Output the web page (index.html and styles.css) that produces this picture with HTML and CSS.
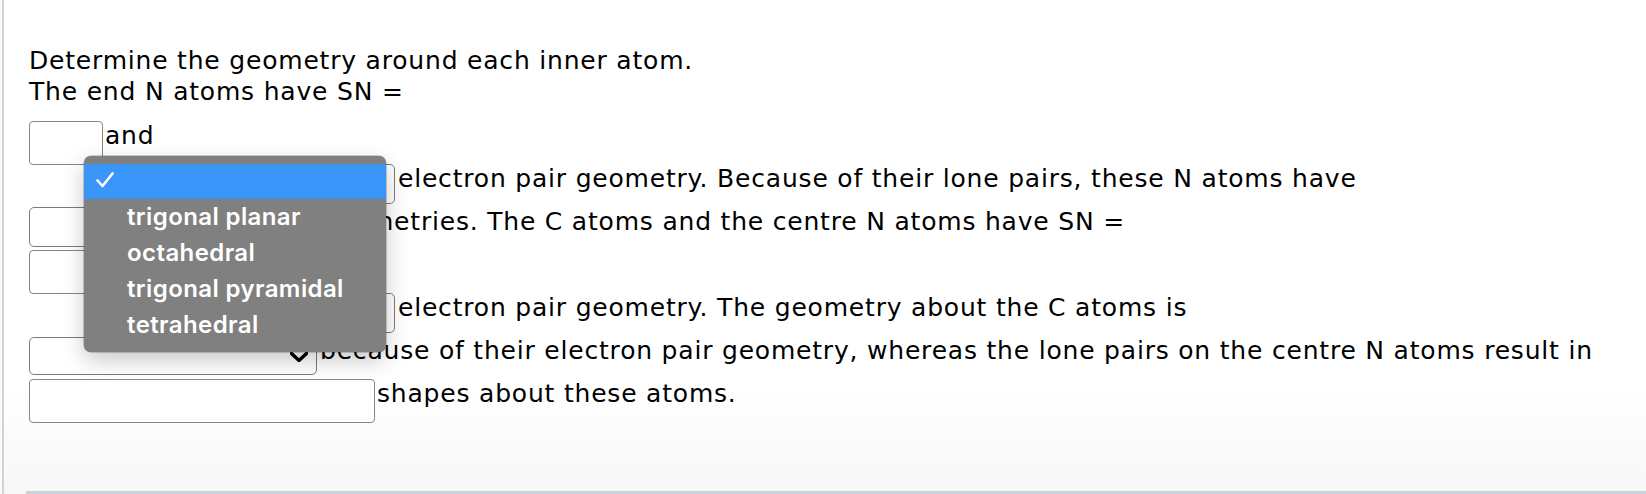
FILE: index.html
```html
<!DOCTYPE html>
<html lang="en">
<head>
<meta charset="utf-8">
<title>Geometry question</title>
<link rel="stylesheet" href="styles.css">
</head>
<body>
<div class="page">
  <div class="question">
    <p class="intro">Determine the geometry around each inner atom.<br>The end N atoms have SN =</p>

    <div class="row">
      <input class="field field-sn" type="text" aria-label="SN end atoms">
      <span class="txt">and</span>
    </div>

    <div class="row">
      <div class="sel sel-epg">
        <select aria-label="electron pair geometry"><option></option></select>
        <svg class="chev" viewBox="0 0 18 10" aria-hidden="true"><polyline points="1.5,1.5 9,8.5 16.5,1.5"/></svg>
      </div>
      <span class="txt">electron pair geometry. Because of their lone pairs, these N atoms have</span>
    </div>

    <div class="row">
      <div class="sel sel-geo">
        <select aria-label="geometry"><option></option></select>
        <svg class="chev" viewBox="0 0 18 10" aria-hidden="true"><polyline points="1.5,1.5 9,8.5 16.5,1.5"/></svg>
      </div>
      <span class="txt">geometries. The C atoms and the centre N atoms have SN =</span>
    </div>

    <div class="row">
      <input class="field field-sn" type="text" aria-label="SN inner atoms">
    </div>

    <div class="row">
      <div class="sel sel-epg">
        <select aria-label="electron pair geometry"><option></option></select>
        <svg class="chev" viewBox="0 0 18 10" aria-hidden="true"><polyline points="1.5,1.5 9,8.5 16.5,1.5"/></svg>
      </div>
      <span class="txt">electron pair geometry. The geometry about the C atoms is</span>
    </div>

    <div class="row">
      <div class="sel sel-geo sel-short">
        <select aria-label="C geometry"><option></option></select>
        <svg class="chev" viewBox="0 0 18 10" aria-hidden="true"><polyline points="1.5,1.5 9,8.5 16.5,1.5"/></svg>
      </div>
      <span class="txt">because of their electron pair geometry, whereas the lone pairs on the centre N atoms result in</span>
    </div>

    <div class="row">
      <input class="field field-wide" type="text" aria-label="shape">
      <span class="txt">shapes about these atoms.</span>
    </div>
  </div>

  <div class="popup" role="listbox">
    <div class="opt opt-selected">
      <svg class="check" viewBox="0 0 18 16" aria-hidden="true"><polyline points="1.5,8.5 6.5,14 16.5,1.5"/></svg>
    </div>
    <div class="opt">trigonal planar</div>
    <div class="opt">octahedral</div>
    <div class="opt">trigonal pyramidal</div>
    <div class="opt">tetrahedral</div>
  </div>

  <div class="rule"></div>
</div>
</body>
</html>
```

FILE: styles.css
```css
html, body {
  margin: 0;
  padding: 0;
}

body {
  width: 1646px;
  height: 494px;
  overflow: hidden;
  background: #fbfbfc;
  font-family: "DejaVu Sans", Verdana, sans-serif;
  color: #000;
}

.page {
  position: relative;
  margin-left: 2px;
  height: 494px;
  border-left: 2px solid #cdd4de;
  background: linear-gradient(to bottom, #ffffff 0%, #ffffff 78%, #f7f7f8 100%);
  display: flex;
  flex-direction: column;
}

.question {
  padding-left: 25px;
  flex: 1;
}

.intro {
  margin: 45px 0 14px 0;
  font-size: 25px;
  letter-spacing: 0.8px;
  line-height: 31px;
}

.row {
  display: flex;
  align-items: flex-start;
  height: 43px;
}

.txt {
  font-size: 25px;
  letter-spacing: 0.8px;
  line-height: 27px;
  padding-top: 1px;
  margin-left: 2px;
  white-space: nowrap;
}

.field {
  box-sizing: border-box;
  height: 44px;
  margin: 0;
  border: 1px solid #858585;
  border-radius: 4px;
  background: #fff;
  padding: 0;
  flex: none;
}

.field-sn {
  width: 74px;
}

.field-wide {
  width: 346px;
}

.sel {
  position: relative;
  flex: none;
  height: 40px;
}

.sel select {
  appearance: none;
  -webkit-appearance: none;
  box-sizing: border-box;
  width: 100%;
  height: 100%;
  margin: 0;
  border: 1px solid #7c7c7c;
  border-radius: 5px;
  background: #fff;
  font-size: 20px;
}

.sel-epg {
  width: 285px;
  margin-left: 81px;
}

.sel-geo {
  width: 288px;
}

.sel-short {
  height: 38px;
  margin-top: 1px;
}

.sel + .txt {
  margin-left: 3px;
}

.chev {
  position: absolute;
  right: 9px;
  top: 50%;
  width: 18px;
  height: 10px;
  margin-top: -4px;
  fill: none;
  stroke: #000;
  stroke-width: 3.4;
  stroke-linecap: round;
  stroke-linejoin: round;
}

.popup {
  position: absolute;
  left: 80px;
  top: 156px;
  width: 302px;
  box-sizing: border-box;
  padding: 8px 0;
  background: #808080;
  border-radius: 7px;
  box-shadow: 0 0 0 0.5px rgba(0, 0, 0, 0.35), 0 8px 22px rgba(0, 0, 0, 0.22);
  font-family: Inter, "Noto Sans", sans-serif;
  font-weight: 600;
  font-size: 24px;
  letter-spacing: 0.4px;
  color: #fff;
}

.opt {
  position: relative;
  height: 36px;
  line-height: 34px;
  padding-left: 43px;
  white-space: nowrap;
}

.opt-selected {
  background: #3a95f8;
  height: 35px;
  margin-bottom: 1px;
}

.check {
  position: absolute;
  left: 12px;
  top: 8px;
  width: 18px;
  height: 16px;
  fill: none;
  stroke: #fff;
  stroke-width: 2.6;
  stroke-linecap: round;
  stroke-linejoin: round;
}

.rule {
  height: 3px;
  margin-left: 22px;
  background: #c9d1dc;
  flex: none;
}
```
